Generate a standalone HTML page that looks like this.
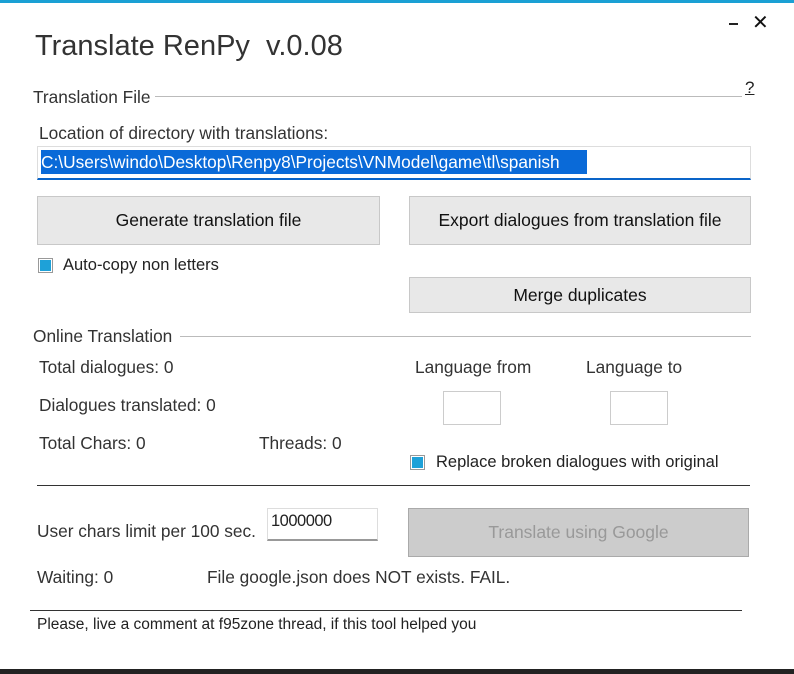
<!DOCTYPE html>
<html><head><meta charset="utf-8"><style>
*{margin:0;padding:0;box-sizing:border-box}
body{width:794px;height:674px;background:#fff;font-family:"Liberation Sans",sans-serif;color:#222;position:relative;overflow:hidden}
.a{position:absolute;white-space:nowrap}
.t{font-size:17.3px;line-height:22px}
.btn{position:absolute;background:#e8e8e8;border:1px solid #c8c8c8;font-size:17.5px;display:flex;align-items:center;justify-content:center;color:#111}
.cb{position:absolute;width:15px;height:15px;border:1px solid #999;background:#fff}
.cb i{position:absolute;left:1px;top:1px;width:11px;height:11px;background:#1ea1d8}
.hl{position:absolute;height:1px;background:#bbb}
</style></head><body>
<div class="a" style="left:0;top:0;width:794px;height:3px;background:#1aa0d4"></div>
<div class="a" style="left:0;top:669px;width:794px;height:5px;background:#222"></div>
<div class="a" style="left:729px;top:23px;width:9px;height:2px;background:#222"></div>
<div class="a" style="left:752px;top:10px;font-size:20px;color:#111">✕</div>
<div class="a" style="left:35px;top:30px;font-size:29px;color:#333">Translate RenPy&nbsp; v.0.08</div>
<div class="a t" style="left:33px;top:86px;color:#333">Translation File</div>
<div class="hl" style="left:155px;top:96px;width:587px"></div>
<div class="a" style="left:745px;top:78px;font-size:17px;text-decoration:underline">?</div>
<div class="a t" style="left:39px;top:122px;color:#333">Location of directory with translations:</div>
<div class="a" style="left:37px;top:146px;width:714px;height:34px;border:1px solid #ddd;border-bottom:2px solid #0a64c8"></div>
<div class="a" style="left:41px;top:150px;height:24px;width:546px;background:#0a6ad8;color:#fff;line-height:24px;font-size:17.3px;overflow:hidden">C:\Users\windo\Desktop\Renpy8\Projects\VNModel\game\tl\spanish</div>
<div class="btn" style="left:37px;top:196px;width:343px;height:49px">Generate translation file</div>
<div class="btn" style="left:409px;top:196px;width:342px;height:49px">Export dialogues from translation file</div>
<div class="cb" style="left:38px;top:258px"><i></i></div>
<div class="a t" style="left:63px;top:254px;font-size:16.5px">Auto-copy non letters</div>
<div class="btn" style="left:409px;top:277px;width:342px;height:36px">Merge duplicates</div>
<div class="a t" style="left:33px;top:325px;color:#333">Online Translation</div>
<div class="hl" style="left:180px;top:336px;width:571px"></div>
<div class="a t" style="left:39px;top:356px;color:#333">Total dialogues: 0</div>
<div class="a t" style="left:415px;top:356px;color:#333">Language from</div>
<div class="a t" style="left:586px;top:356px;color:#333">Language to</div>
<div class="a" style="left:443px;top:391px;width:58px;height:34px;border:1px solid #ccc"></div>
<div class="a" style="left:610px;top:391px;width:58px;height:34px;border:1px solid #ccc"></div>
<div class="a t" style="left:39px;top:394px;color:#333">Dialogues translated: 0</div>
<div class="a t" style="left:39px;top:432px;color:#333">Total Chars: 0</div>
<div class="a t" style="left:259px;top:432px;color:#333">Threads: 0</div>
<div class="cb" style="left:410px;top:455px"><i></i></div>
<div class="a t" style="left:436px;top:451px;font-size:16.5px">Replace broken dialogues with original</div>
<div class="a" style="left:37px;top:485px;width:713px;height:1px;background:#333"></div>
<div class="a t" style="left:37px;top:520px;color:#333">User chars limit per 100 sec.</div>
<div class="a" style="left:267px;top:508px;width:111px;height:33px;border:1px solid #ddd;border-bottom:2px solid #999;font-size:16.5px;padding:3px 3px;color:#222;letter-spacing:-0.5px">1000000</div>
<div class="btn" style="left:408px;top:508px;width:341px;height:49px;background:#ccc;border-color:#aaa;color:#999">Translate using Google</div>
<div class="a t" style="left:37px;top:566px;color:#333">Waiting: 0</div>
<div class="a t" style="left:207px;top:566px;color:#333">File google.json does NOT exists. FAIL.</div>
<div class="a" style="left:30px;top:610px;width:712px;height:1px;background:#333"></div>
<div class="a" style="left:37px;top:616px;font-size:15.5px;color:#222">Please, live a comment at f95zone thread, if this tool helped you</div>
</body></html>
